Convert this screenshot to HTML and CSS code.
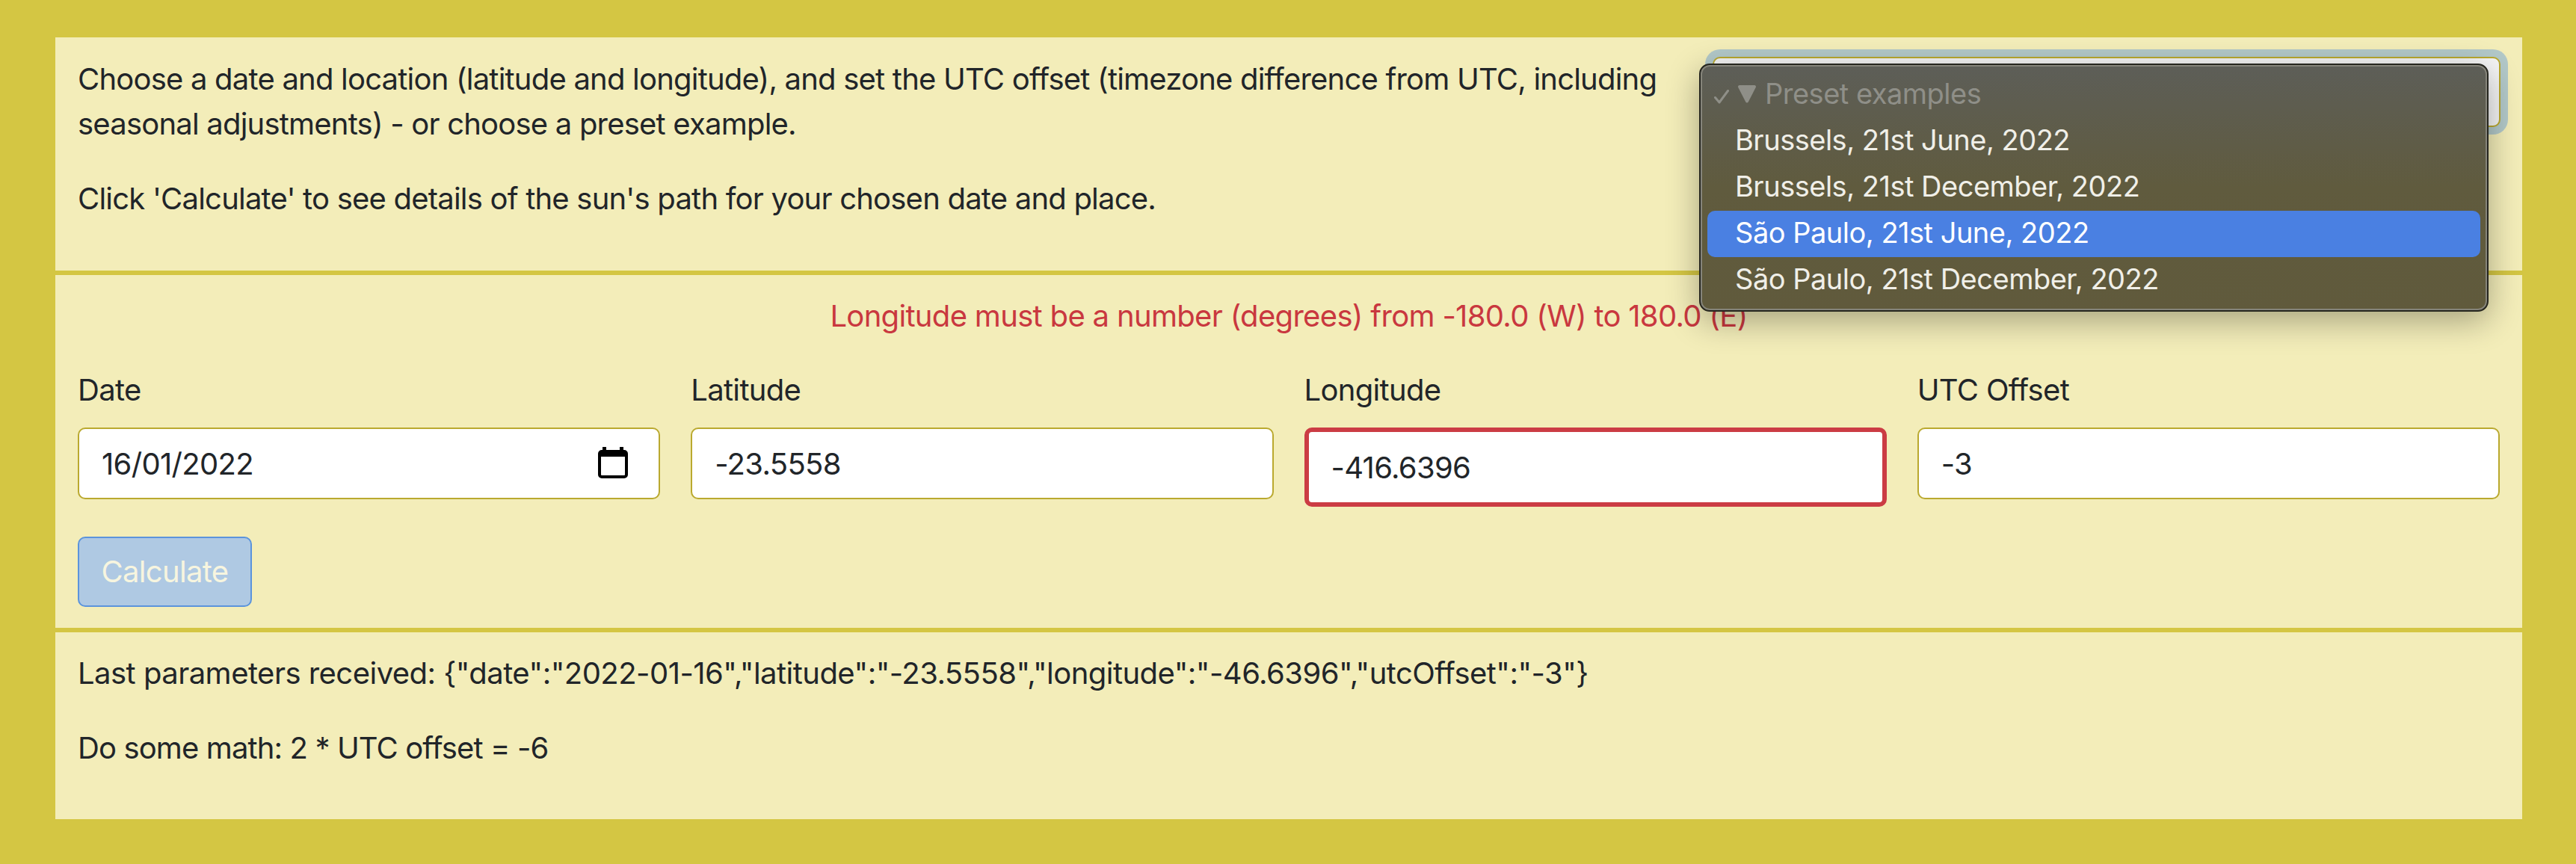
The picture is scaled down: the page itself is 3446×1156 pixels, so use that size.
FILE: index.html
```html
<!DOCTYPE html>
<html lang="en">
<head>
    <meta charset="UTF-8">
    <title>Sun path</title>
    <link rel="stylesheet" href="styles.css">
</head>
<body>
    <div class="page">
        <section class="panel intro">
            <div class="intro-text">
                <p>Choose a date and location (latitude and longitude), and set the UTC offset (timezone difference from UTC, including seasonal adjustments) - or choose a preset example.</p>
                <p>Click 'Calculate' to see details of the sun's path for your chosen date and place.</p>
            </div>
            <div class="preset">
                <div class="preset-select"></div>
                <div class="preset-menu">
                    <div class="preset-option disabled">
                        <svg class="check" viewBox="0 0 20 19" width="20" height="19">
                            <path d="M1.500 10.500L7 17L18.500 1.500" fill="none" stroke="#8f8f88" stroke-width="3" stroke-linecap="round" stroke-linejoin="round"/>
                        </svg>
                        <svg class="triangle" viewBox="0 0 26 25" width="26" height="25">
                            <path d="M3 1h20a2 2 0 0 1 1.700 3L14.700 23.500a2 2 0 0 1-3.400 0L1.300 4A2 2 0 0 1 3 1z" fill="#8f8f88"/>
                        </svg>
                        Preset examples
                    </div>
                    <div class="preset-option">Brussels, 21st June, 2022</div>
                    <div class="preset-option">Brussels, 21st December, 2022</div>
                    <div class="preset-option active">São Paulo, 21st June, 2022</div>
                    <div class="preset-option">São Paulo, 21st December, 2022</div>
                </div>
            </div>
        </section>

        <section class="panel form">
            <div class="error">Longitude must be a number (degrees) from -180.0 (W) to 180.0 (E)</div>
            <div class="fields">
                <div class="field">
                    <label for="date">Date</label>
                    <div class="date-wrap">
                        <input type="text" id="date" class="input-field" value="16/01/2022">
                        <svg class="calendar" viewBox="0 0 40 42" width="40" height="42">
                            <path d="M6 0h5v4h18V0h5v4h1a5 5 0 0 1 5 5v28a5 5 0 0 1-5 5H5a5 5 0 0 1-5-5V9a5 5 0 0 1 5-5h1zM4 13v24a1 1 0 0 0 1 1h30a1 1 0 0 0 1-1V13z" fill-rule="evenodd"/>
                        </svg>
                    </div>
                </div>
                <div class="field">
                    <label for="latitude">Latitude</label>
                    <input type="text" id="latitude" class="input-field" value="-23.5558">
                </div>
                <div class="field">
                    <label for="longitude">Longitude</label>
                    <input type="text" id="longitude" class="input-field invalid" value="-416.6396">
                </div>
                <div class="field">
                    <label for="utcOffset">UTC Offset</label>
                    <input type="text" id="utcOffset" class="input-field" value="-3">
                </div>
            </div>
            <button class="calculate" disabled>Calculate</button>
        </section>

        <section class="panel results">
            <p class="last-params">Last parameters received: {"date":"2022-01-16","latitude":"-23.5558","longitude":"-46.6396","utcOffset":"-3"}</p>
            <p class="math">Do some math: 2 * UTC offset = -6</p>
        </section>
    </div>
</body>
</html>
```

FILE: styles.css
```css
* {
    box-sizing: border-box;
}
body {
    margin: 0;
    height: 1156px;
    overflow: hidden;
    background-color: #d4c643;
    color: #212529;
    font-family: 'Inter', sans-serif;
    font-size: 40px;
    line-height: 60px;
    letter-spacing: -0.68px;
}
.page {
    width: 3300px;
    margin: 50px 0 0 74px;
    display: flex;
    flex-direction: column;
    gap: 6px;
}
.panel {
    background-color: #f3edb9;
    padding: 0 30px;
}
p {
    margin: 0 0 40px;
}
.intro {
    height: 312px;
    padding-top: 26px;
    display: flex;
    justify-content: space-between;
}
.intro-text {
    width: 2150px;
    letter-spacing: -0.79px;
}
.preset {
    position: relative;
    width: 1054px;
    margin-right: -1px;
}
.preset-select {
    height: 94px;
    background-color: #f5f5f5;
    border: 2px solid #baa92f;
    border-radius: 10px;
    box-shadow: 0 0 0 10px #b2c8c8;
}
.preset-menu {
    position: absolute;
    top: 9px;
    left: -18px;
    width: 1056px;
    height: 332px;
    padding: 9px;
    border: 2px solid #26261f;
    border-radius: 14px;
    background: linear-gradient(180deg, #5d5e58 0%, #605b3e 50%, #605a3c 100%);
    box-shadow: inset 0 0 0 2px #85847a, 0 12px 44px rgba(0, 0, 0, 0.32);
    color: #f0efe8;
    font-size: 38px;
    letter-spacing: -0.5px;
}
.preset-option {
    height: 62px;
    padding-left: 37px;
    line-height: 58px;
    border-radius: 10px;
    white-space: nowrap;
}
.preset-option.disabled {
    position: relative;
    padding-left: 77px;
    color: #8f8f88;
}
.preset-option.active {
    background-color: #4a80e2;
    color: #fff;
}
.check {
    position: absolute;
    left: 9px;
    top: 24px;
}
.triangle {
    position: absolute;
    left: 40px;
    top: 17px;
}
.form {
    height: 472px;
    padding-top: 25px;
}
.error {
    color: #c9383f;
    text-align: center;
}
.fields {
    display: grid;
    grid-template-columns: repeat(4, 1fr);
    column-gap: 41px;
    align-items: start;
    margin-top: 39px;
}
label {
    display: block;
    margin-bottom: 20px;
}
.input-field {
    display: block;
    width: 100%;
    height: 96px;
    padding: 0 30px;
    background-color: #fff;
    border: 2px solid #baa92f;
    border-radius: 10px;
    color: #212529;
    font: inherit;
    letter-spacing: inherit;
    outline: none;
}
.input-field.invalid {
    height: 106px;
    border: 6px solid #cb3c44;
    padding: 0 30px;
}
.date-wrap {
    position: relative;
}
.calendar {
    position: absolute;
    right: 43px;
    top: 26px;
}
.calculate {
    display: block;
    width: 233px;
    height: 94px;
    margin-top: 40px;
    padding: 0;
    background-color: #afc9e3;
    border: 2px solid #5b94dc;
    border-radius: 10px;
    color: #f7f5df;
    font: inherit;
    letter-spacing: inherit;
}
.results {
    height: 250px;
    padding-top: 25px;
}
.last-params {
    letter-spacing: -0.53px;
}
.math {
    letter-spacing: -0.88px;
}
```
